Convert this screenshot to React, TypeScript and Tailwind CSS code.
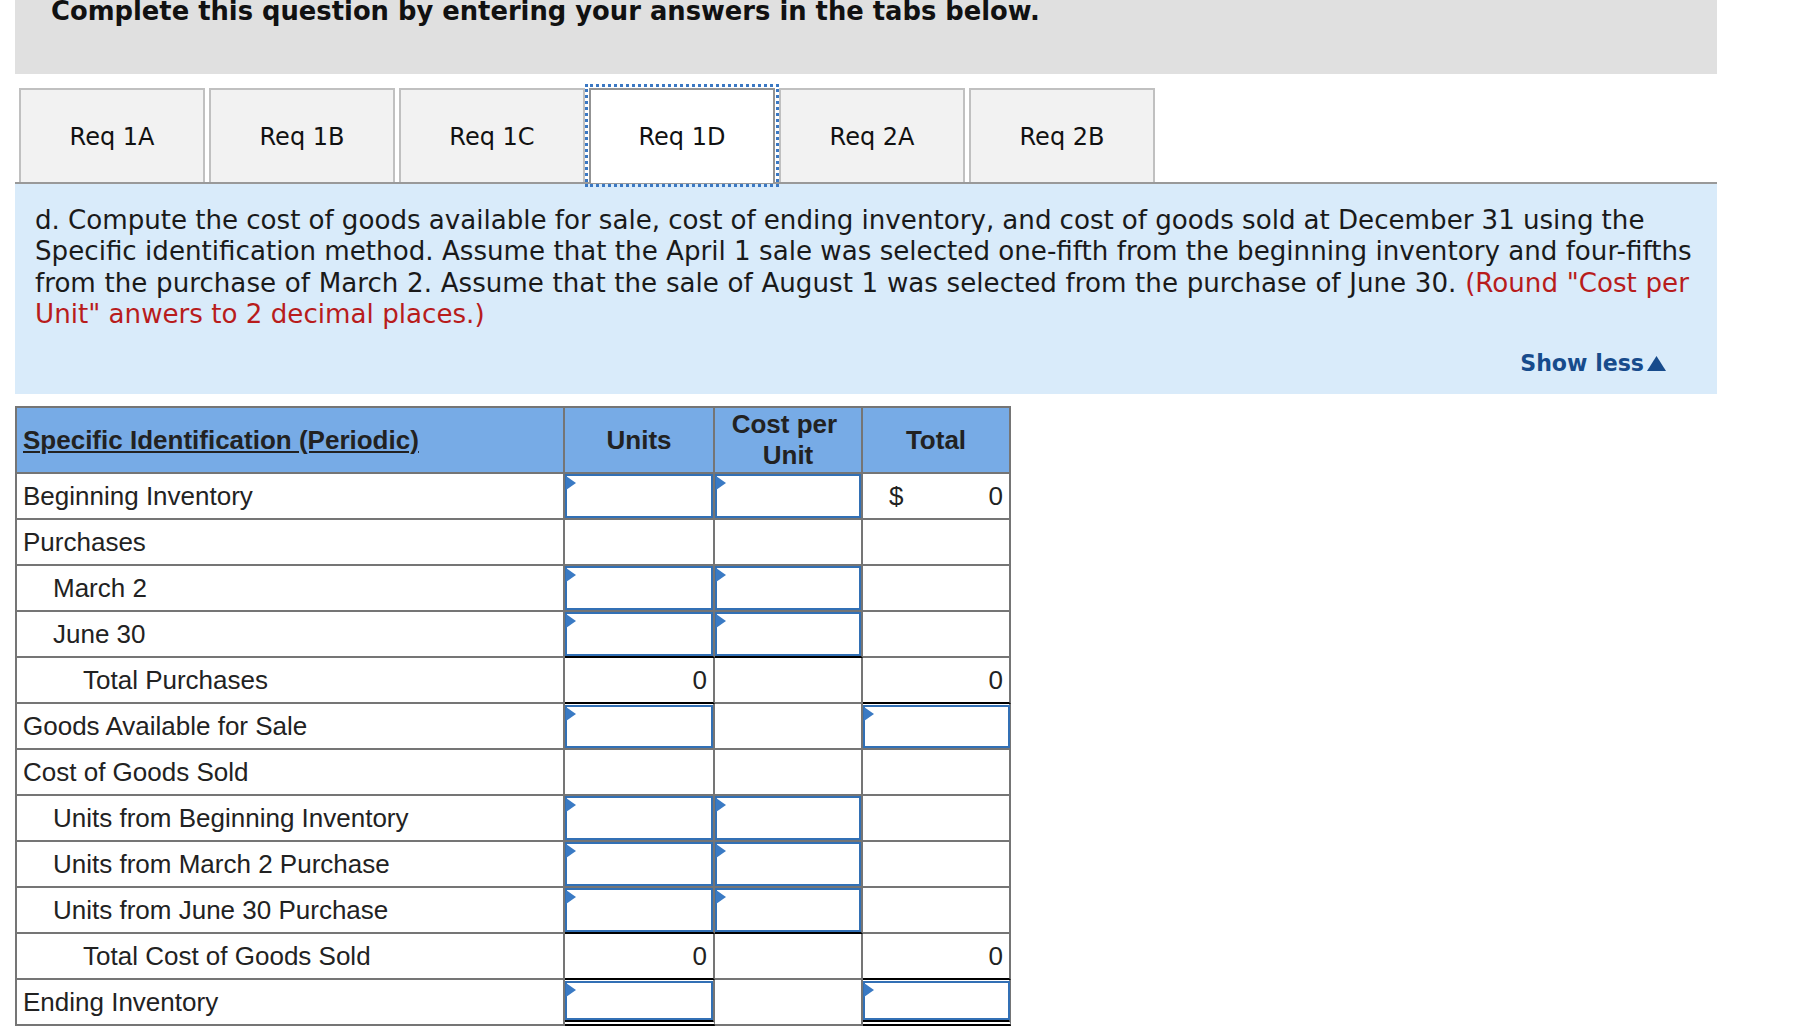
import React from "react";

const TABS = ["Req 1A", "Req 1B", "Req 1C", "Req 1D", "Req 2A", "Req 2B"];

type Cell = "" | "input" | "0" | "$0";
type Row = {
  label: string;
  indent?: 0 | 1 | 2;
  cells: [Cell, Cell, Cell];
  black?: [boolean, boolean, boolean];
  afterBlack?: boolean;
};

const ROWS: Row[] = [
  { label: "Beginning Inventory", cells: ["input", "input", "$0"] },
  { label: "Purchases", cells: ["", "", ""] },
  { label: "March 2", indent: 1, cells: ["input", "input", ""] },
  { label: "June 30", indent: 1, cells: ["input", "input", ""], black: [true, true, false] },
  { label: "Total Purchases", indent: 2, cells: ["0", "", "0"], black: [true, false, true] },
  { label: "Goods Available for Sale", cells: ["input", "", "input"], afterBlack: true },
  { label: "Cost of Goods Sold", cells: ["", "", ""] },
  { label: "Units from Beginning Inventory", indent: 1, cells: ["input", "input", ""] },
  { label: "Units from March 2 Purchase", indent: 1, cells: ["input", "input", ""] },
  { label: "Units from June 30 Purchase", indent: 1, cells: ["input", "input", ""], black: [true, true, false] },
  { label: "Total Cost of Goods Sold", indent: 2, cells: ["0", "", "0"], black: [true, false, true] },
];

function Input({ last, kind }: { last?: boolean; kind?: "gap" | "short" }) {
  const size = kind === "short" ? "mt-[1px] h-[39px]" : kind === "gap" ? "mt-[1px] h-[43px]" : "h-[44px]";
  return (
    <div className={`relative border-2 border-[#3270b5] bg-white ${last ? "-mr-[1px]" : ""} ${size}`}>
      <svg className="absolute left-[-1px] top-0" width="10" height="14" viewBox="0 0 10 14">
        <path d="M0 0 L10 7 L0 14 Z" fill="#3a7ac4" />
      </svg>
    </div>
  );
}

function Td({ cell, black, last, gap }: { cell: Cell; black?: boolean; last?: boolean; gap?: boolean }) {
  const base = `h-[46px] p-0 border-r-2 border-b-2 align-top ${black ? "border-b-black" : "border-b-[#757575]"} border-r-[#757575]`;
  if (cell === "input") {
    return (
      <td className={base}>
        <Input last={last} kind={gap ? "gap" : undefined} />
      </td>
    );
  }
  const text = "flex h-[44px] items-center pr-[6px]";
  if (cell === "$0") {
    return (
      <td className={base}>
        <div className={`${text} justify-between pl-[26px]`}>
          <span>$</span>
          <span>0</span>
        </div>
      </td>
    );
  }
  return (
    <td className={base}>
      <div className={`${text} justify-end`}>{cell}</div>
    </td>
  );
}

export default function App() {
  return (
    <div className="h-[1035px] w-[1815px] overflow-hidden bg-white font-['DejaVu_Sans',sans-serif] text-[#111]">
      <div className="ml-[15px] w-[1702px]">
        <div className="h-[74px] bg-[#e0e0e0] pl-[36px]">
          <p className="text-[25.8px] leading-[23px] font-bold">
            Complete this question by entering your answers in the tabs below.
          </p>
        </div>

        <div className="mt-[14px] flex h-[96px] gap-[4px] border-b-2 border-b-[#999999] pl-[4px]">
          {TABS.map((t, i) =>
            i === 3 ? (
              <div
                key={t}
                className="relative z-10 flex h-[95px] w-[186px] items-center justify-center border-2 border-b-0 border-[#939393] bg-white text-[24px] outline-[3px] outline-offset-[1px] outline-dotted outline-[#3a78c3]"
              >
                {t}
              </div>
            ) : (
              <div
                key={t}
                className="flex h-[94px] w-[186px] items-center justify-center border-2 border-b-0 border-[#c0c0c0] bg-[#f2f2f2] pt-[2px] text-[24px]"
              >
                {t}
              </div>
            )
          )}
        </div>

        <div className="h-[210px] bg-[#d9ebfa] px-[20px] pt-[21px] text-[26.15px] leading-[31.3px] text-[#1a1a1a]">
          <p>
            <span className="block [word-spacing:-0.23px]">
              d. Compute the cost of goods available for sale, cost of ending inventory, and cost of goods sold at December 31 using the
            </span>
            <span className="block">
              Specific identification method. Assume that the April 1 sale was selected one-fifth from the beginning inventory and four-fifths
            </span>
            <span className="block [word-spacing:0.37px]">
              from the purchase of March 2. Assume that the sale of August 1 was selected from the purchase of June 30.{" "}
              <span className="text-[#b81c1c]">(Round "Cost per</span>
            </span>
            <span className="block text-[#b81c1c]">Unit" anwers to 2 decimal places.)</span>
          </p>
          <div className="mt-[18px] flex items-center justify-end gap-[3px] pr-[31px] text-[22.1px] leading-[30px] font-bold text-[#174b8c]">
            <span>Show less</span>
            <svg width="19" height="15" viewBox="0 0 19 15">
              <path d="M9.5 0 L19 15 L0 15 Z" fill="#174b8c" />
            </svg>
          </div>
        </div>

        <table className="mt-[12px] w-[996px] table-fixed border-separate border-spacing-0 font-['Liberation_Sans',sans-serif] text-[26px] text-[#222]">
          <colgroup>
            <col className="w-[550px]" />
            <col className="w-[150px]" />
            <col className="w-[148px]" />
            <col className="w-[148px]" />
          </colgroup>
          <thead>
            <tr className="bg-[#77abe6] font-bold">
              <th className="h-[68px] border-2 border-[#757575] pl-[6px] text-left">
                <span className="underline">Specific Identification (Periodic)</span>
              </th>
              <th className="border-y-2 border-r-2 border-[#757575]">Units</th>
              <th className="border-y-2 border-r-2 border-[#757575] leading-[31px] font-bold">
                Cost per&nbsp;
                <br />
                Unit
              </th>
              <th className="border-y-2 border-r-2 border-[#757575]">Total</th>
            </tr>
          </thead>
          <tbody>
            {ROWS.map((r) => (
              <tr key={r.label}>
                <td
                  className={`h-[46px] border-x-2 border-b-2 border-[#757575] ${
                    r.indent === 1 ? "pl-[36px]" : r.indent === 2 ? "pl-[66px]" : "pl-[6px]"
                  }`}
                >
                  {r.label}
                </td>
                {r.cells.map((c, i) => (
                  <Td key={i} cell={c} black={r.black?.[i]} last={i === 2} gap={r.afterBlack} />
                ))}
              </tr>
            ))}
            <tr>
              <td className="h-[46px] border-x-2 border-b-2 border-[#757575] pl-[6px]">Ending Inventory</td>
              <td className="h-[46px] border-r-2 border-b-[6px] border-double border-r-[#757575] border-b-black p-0 align-top">
                <Input kind="short" />
              </td>
              <td className="h-[46px] border-r-2 border-b-2 border-[#757575]"></td>
              <td className="h-[46px] border-r-2 border-b-[6px] border-double border-r-[#757575] border-b-black p-0 align-top">
                <Input kind="short" last />
              </td>
            </tr>
          </tbody>
        </table>
      </div>
    </div>
  );
}
